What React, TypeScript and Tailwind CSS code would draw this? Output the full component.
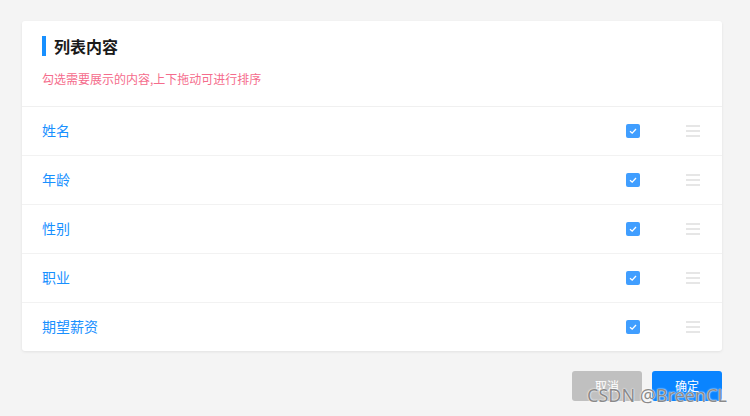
import React from "react";

const items = ["姓名", "年龄", "性别", "职业", "期望薪资"];

function Check() {
  return (
    <div className="w-[14px] h-[14px] rounded-[2px] bg-[#409eff] flex items-center justify-center">
      <svg width="10" height="10" viewBox="0 0 10 10">
        <path d="M2 5.2 L4.2 7.2 L8 3" fill="none" stroke="white" strokeWidth="1.3" />
      </svg>
    </div>
  );
}

function Drag() {
  return (
    <div className="flex flex-col gap-[3px] w-[14px]">
      <div className="h-[2px] bg-[#e6e6e6]" />
      <div className="h-[2px] bg-[#e6e6e6]" />
      <div className="h-[2px] bg-[#e6e6e6]" />
    </div>
  );
}

export default function App() {
  return (
    <div
      className="relative w-[750px] h-[416px] bg-[#f4f4f4] pt-[21px] pl-[22px] pr-[28px] overflow-hidden"
      style={{ fontFamily: '"Noto Sans CJK SC", "Noto Sans", sans-serif' }}
    >
      <div className="bg-white rounded-[3px] shadow-[0_1px_3px_rgba(0,0,0,0.08)]">
        <div className="h-[86px] pl-[20px] pt-[15px] border-b border-[#f0f0f0]">
          <div className="flex items-center h-[20px]">
            <div className="w-[4px] h-[20px] bg-[#1890ff] mr-[8px]" />
            <span className="text-[16px] font-bold text-[#1a1a1a] leading-none">列表内容</span>
          </div>
          <div className="mt-[17px] text-[12px] text-[#f56c8c] leading-none">
            勾选需要展示的内容,上下拖动可进行排序
          </div>
        </div>
        {items.map((it, i) => (
          <div
            key={it}
            className={`flex items-center pl-[20px] ${i < items.length - 1 ? "h-[49px] border-b border-[#f2f2f2] pt-[0px]" : "h-[48px]"}`}
          >
            <span className="flex-1 text-[14px] text-[#1890ff] -mt-[1px]">{it}</span>
            <div className="w-[14px] mr-[46px] -mt-[1px]">
              <Check />
            </div>
            <div className="mr-[22px] -mt-[1px]">
              <Drag />
            </div>
          </div>
        ))}
      </div>
      <div className="flex justify-end gap-[10px] mt-[20px]">
        <button className="w-[70px] h-[30px] rounded-[3px] bg-[#c0c0c0] text-white text-[12px]">取消</button>
        <button className="w-[70px] h-[30px] rounded-[3px] bg-[#0a84ff] text-white text-[12px]">确定</button>
      </div>
      <div
        className="absolute left-[587px] top-[386px] text-[18px] text-[#8a8a8a] leading-none"
        style={{ textShadow: "0 0 2px #fff, 0 0 1px #fff", fontFamily: '"Noto Sans", sans-serif' }}
      >
        CSDN @BreenCL
      </div>
    </div>
  );
}
